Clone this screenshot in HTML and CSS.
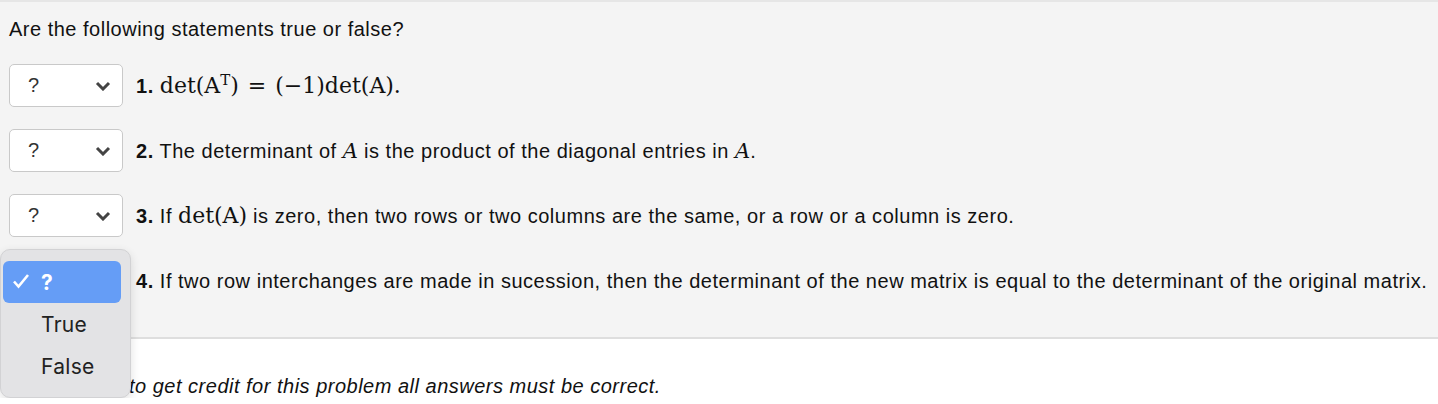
FILE: index.html
```html
<!DOCTYPE html>
<html lang="en">
<head>
    <meta charset="UTF-8">
    <title>True or false</title>
    <link rel="stylesheet" href="styles.css">
</head>
<body>
    <!-- Problem panel -->
    <div class="panel">
        <p class="pregunta">Are the following statements true or false?</p>

        <div class="fila">
            <div class="selector"><span>?</span><svg class="flecha" viewBox="0 0 16 10"><path d="M2 2 L8 8 L14 2"/></svg></div>
            <p class="enunciado"><b>1.</b> <span class="mate">det(A<sup>T</sup>) <span class="rel">=</span> (−1)det(A).</span></p>
        </div>

        <div class="fila">
            <div class="selector"><span>?</span><svg class="flecha" viewBox="0 0 16 10"><path d="M2 2 L8 8 L14 2"/></svg></div>
            <p class="enunciado"><b>2.</b> The determinant of <i class="mate">A</i> is the product of the diagonal entries in <i class="mate">A</i>.</p>
        </div>

        <div class="fila">
            <div class="selector"><span>?</span><svg class="flecha" viewBox="0 0 16 10"><path d="M2 2 L8 8 L14 2"/></svg></div>
            <p class="enunciado"><b>3.</b> If <span class="mate">det(A)</span> is zero, then two rows or two columns are the same, or a row or a column is zero.</p>
        </div>

        <div class="fila">
            <div class="selector abierto">
                <span>?</span><svg class="flecha" viewBox="0 0 16 10"><path d="M2 2 L8 8 L14 2"/></svg>
                <!-- Menu desplegado -->
                <div class="menu">
                    <div class="opcion activa"><svg class="check" viewBox="0 0 18 16"><path d="M2 8.5 L6.5 13.5 L16 2"/></svg>?</div>
                    <div class="opcion">True</div>
                    <div class="opcion">False</div>
                </div>
            </div>
            <p class="enunciado"><b>4.</b> If two row interchanges are made in sucession, then the determinant of the new matrix is equal to the determinant of the original matrix.</p>
        </div>
    </div>

    <p class="nota">to get credit for this problem all answers must be correct.</p>
</body>
</html>
```

FILE: styles.css
```css
/* Cuerpo */
body {
    margin: 0;
    background-color: #fff;
    font-family: "Liberation Sans", Arial, sans-serif;
    color: #111;
}

p {
    margin: 0;
}

/* Panel gris */
.panel {
    background-color: #f4f4f4;
    border-top: 2px solid #e6e6e6;
    border-bottom: 2px solid #dedede;
    padding: 15px 0 35px 9px;
}

.pregunta {
    font-size: 20px;
    letter-spacing: 0.5px;
    line-height: 24px;
    margin-bottom: 23px;
}

/* Filas */
.fila {
    display: flex;
    align-items: center;
    gap: 13px;
    margin-bottom: 22px;
}

.fila:last-child {
    margin-bottom: 0;
}

.selector {
    position: relative;
    box-sizing: border-box;
    width: 114px;
    height: 43px;
    flex-shrink: 0;
    display: flex;
    align-items: center;
    justify-content: space-between;
    padding: 0 11px 0 18px;
    background-color: #fff;
    border: 1px solid #c9c9c9;
    border-radius: 5px;
    font-size: 20px;
    color: #333;
}

.flecha {
    width: 16px;
    height: 10px;
    fill: none;
    stroke: #444;
    stroke-width: 3;
}

.enunciado {
    font-size: 20px;
    letter-spacing: 0.52px;
    line-height: 24px;
    white-space: nowrap;
}

.mate {
    font-family: "DejaVu Serif", "Liberation Serif", serif;
    font-size: 22px;
    letter-spacing: 0;
}

.mate .rel {
    padding: 0 2px;
}

i.mate {
    font-size: 21px;
}

.mate sup {
    font-size: 15px;
    line-height: 0;
}

/* Menu desplegado */
.menu {
    position: absolute;
    top: -11px;
    left: -10px;
    z-index: 5;
    width: 131px;
    box-sizing: border-box;
    padding: 11px 9px 10px 2px;
    background-color: #e3e3e5;
    border: 1px solid #d2d2d4;
    border-radius: 10px;
    box-shadow: 0 3px 10px rgba(0, 0, 0, 0.12);
    font-family: Inter, "Liberation Sans", sans-serif;
    font-size: 21px;
    letter-spacing: 0.3px;
    color: #222;
}

.opcion {
    display: flex;
    align-items: center;
    height: 42px;
    padding-left: 38px;
    border-radius: 6px;
}

.opcion.activa {
    position: relative;
    background-color: #659df6;
    color: #fff;
    font-weight: bold;
}

.check {
    position: absolute;
    left: 9px;
    top: 12px;
    width: 18px;
    height: 16px;
    fill: none;
    stroke: #fff;
    stroke-width: 2.6;
}

/* Nota de abajo */
.nota {
    padding: 35px 0 0 129px;
    font-size: 20px;
    letter-spacing: 0.5px;
    font-style: italic;
    line-height: 24px;
}
```
